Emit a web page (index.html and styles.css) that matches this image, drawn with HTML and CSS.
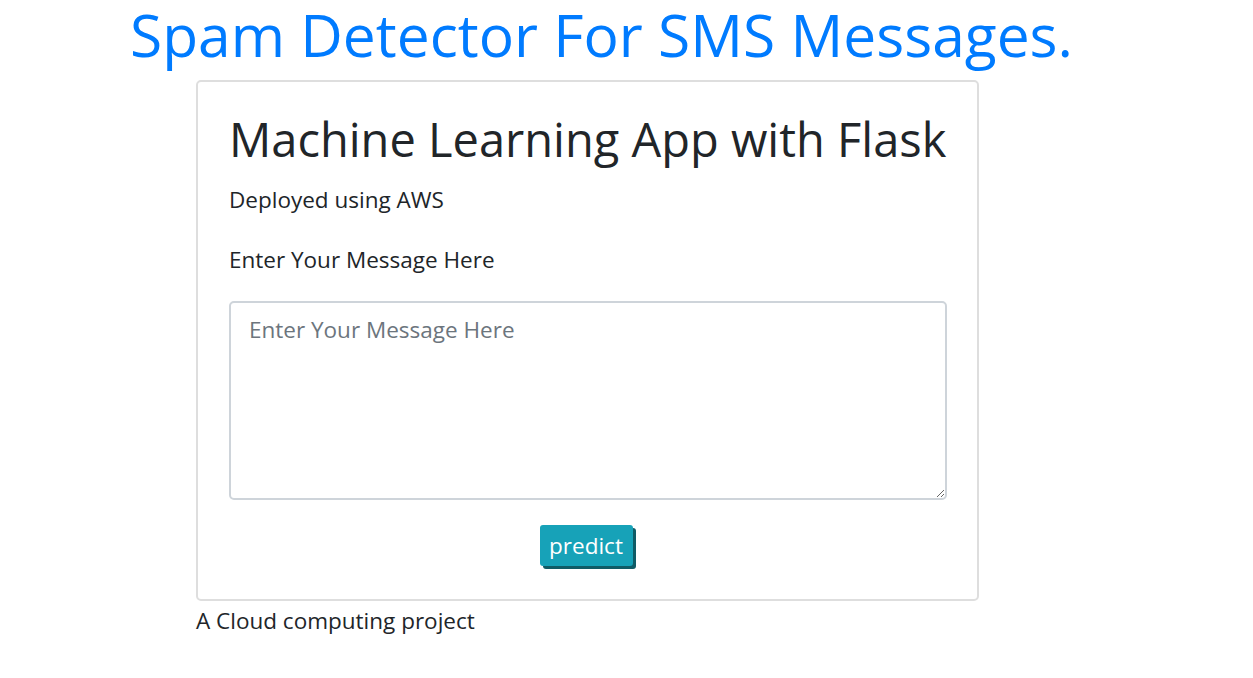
FILE: index.html
```html
<!DOCTYPE html>
<html lang="en">
<head>
<meta charset="utf-8">
<title>Spam Detector</title>
<link rel="stylesheet" href="styles.css">
</head>
<body>
<header class="header">
  <h1 class="site-title">Spam Detector For SMS Messages.</h1>
</header>
<main class="main">
  <section class="card">
    <h2 class="card-title">Machine Learning App with Flask</h2>
    <p class="lead">Deployed using AWS</p>
    <form class="form">
      <label class="label" for="message">Enter Your Message Here</label>
      <textarea id="message" class="textarea" placeholder="Enter Your Message Here"></textarea>
      <div class="actions">
        <button type="button" class="btn">predict</button>
      </div>
    </form>
  </section>
  <p class="footer">A Cloud computing project</p>
</main>
</body>
</html>
```
FILE: styles.css
```css
* { box-sizing: border-box; }
html, body { margin: 0; padding: 0; background: #fff; }
body {
  font-family: "Open Sans", "Noto Sans", "DejaVu Sans", sans-serif;
  color: #212529;
}
.header {
  padding-right: 50px;
  text-align: center;
}
.site-title {
  margin: 0;
  font-size: 58.7px;
  line-height: 68px;
  font-weight: 400;
  color: #007bff;
}
.main {
  margin-top: 12px;
  margin-left: 196px;
  width: 783px;
}
.card {
  border: 2px solid #dedede;
  border-radius: 5px;
  padding: 29px 30px 33px 31px;
}
.card-title {
  margin: 0;
  font-size: 47px;
  line-height: 57.6px;
  font-weight: 400;
}
.lead {
  margin: 15px 0 0;
  font-size: 22.5px;
  line-height: 32px;
}
.form { margin: 0; }
.label {
  display: block;
  margin-top: 28px;
  font-size: 22.5px;
  line-height: 32px;
}
.textarea {
  display: block;
  width: 100%;
  height: 199px;
  margin-top: 25px;
  padding: 11px 18px;
  border: 2px solid #ced4da;
  border-radius: 5px;
  font-family: inherit;
  font-size: 22.5px;
  line-height: 32px;
  color: #495057;
  resize: vertical;
}
.textarea::placeholder { color: #6c757d; }
.actions {
  display: flex;
  justify-content: center;
  margin-top: 25px;
}
.btn {
  width: 93px;
  height: 41px;
  padding: 0;
  margin-right: 4px;
  border: none;
  border-radius: 3px;
  background: #17a2b8;
  color: #fff;
  font-family: inherit;
  font-size: 22.5px;
  line-height: 41px;
  box-shadow: 3px 3px 0 #0f5b66;
}
.footer {
  margin: 4px 0 0;
  font-size: 22.5px;
  line-height: 32px;
}
```
